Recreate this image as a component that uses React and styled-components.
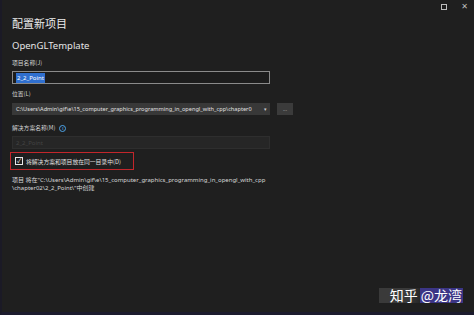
import React from 'react'
import styled, { createGlobalStyle } from 'styled-components'

const Global = createGlobalStyle`
	html, body {
		margin: 0;
		padding: 0;
		background: #1f1f1f;
	}
	body {
		font-family: 'Noto Sans', 'Noto Sans CJK SC', sans-serif;
		color: #d8d8d8;
	}
`

const Window = styled.div`
	position: relative;
	width: 474px;
	height: 315px;
	box-sizing: border-box;
	background: #1f1f1f;
	border-left: 2px solid #1b1a26;
	border-bottom: 3px solid #1c1b2e;
	overflow: hidden;
`

const TitleBar = styled.div`
	display: flex;
	justify-content: flex-end;
	align-items: center;
	gap: 14px;
	height: 14px;
	padding: 0 6px 0 0;
`

const MaxIcon = styled.span`
	width: 4px;
	height: 4px;
	border: 1px solid #bdbdbd;
`

const CloseIcon = styled.span`
	font-size: 8px;
	line-height: 8px;
	color: #bdbdbd;
	font-family: 'DejaVu Sans', sans-serif;
`

const Content = styled.div`
	display: flex;
	flex-direction: column;
	padding: 0 0 0 10px;
`

const Title = styled.h1`
	margin: 2px 0 0;
	font-size: 11px;
	line-height: 14px;
	font-weight: 400;
	color: #ececec;
	font-family: 'Noto Sans CJK SC', sans-serif;
`

const Project = styled.h2`
	margin: 10px 0 0;
	font-size: 9.5px;
	line-height: 12px;
	font-weight: 400;
	color: #e6e6e6;
`

const Label = styled.div`
	display: flex;
	align-items: center;
	gap: 4px;
	margin-top: ${(p) => p.$top}px;
	font-size: 5.8px;
	line-height: 8px;
	color: #d4d4d4;
	font-family: 'Noto Sans CJK SC', sans-serif;
`

const Info = styled.span`
	display: inline-flex;
	align-items: center;
	justify-content: center;
	width: 5px;
	height: 5px;
	border: 1px solid #4ea3e6;
	border-radius: 50%;
	font-size: 4px;
	color: #4ea3e6;
	font-weight: 700;
`

const TextBox = styled.div`
	display: flex;
	align-items: center;
	box-sizing: border-box;
	width: 258px;
	height: 13px;
	margin-top: ${(p) => p.$top}px;
	padding: 0 3px;
	border: 1px solid ${(p) => (p.$disabled ? '#2e2e2e' : '#8a8a8a')};
	background: ${(p) => (p.$disabled ? '#262626' : '#1c1c1c')};
	font-size: 6px;
	color: ${(p) => (p.$disabled ? '#444' : '#fff')};
`

const Selected = styled.span`
	background: #2f6fcf;
	color: #fff;
	padding: 1px 1px;
	line-height: 8px;
`

const Row = styled.div`
	display: flex;
	align-items: center;
	gap: 7px;
	margin-top: 5px;
`

const Combo = styled.div`
	display: flex;
	align-items: center;
	justify-content: space-between;
	box-sizing: border-box;
	width: 258px;
	height: 12px;
	padding: 0 3px 0 4px;
	background: #383838;
	font-size: 5.6px;
	color: #e0e0e0;
	white-space: nowrap;
`

const Chevron = styled.span`
	font-size: 5px;
	color: #cfcfcf;
	margin-left: 3px;
`

const Browse = styled.button`
	width: 16px;
	height: 12px;
	padding: 0;
	border: none;
	background: #3b3b3b;
	color: #cfcfcf;
	font-size: 5px;
	line-height: 12px;
`

const Highlight = styled.div`
	display: flex;
	align-items: center;
	gap: 3px;
	box-sizing: border-box;
	width: 124px;
	height: 18px;
	margin: 3px 0 0 -2px;
	padding-left: 4px;
	border: 1.5px solid #c3262b;
	font-size: 5.8px;
	color: #e0e0e0;
	font-family: 'Noto Sans CJK SC', sans-serif;
`

const Check = styled.span`
	display: inline-flex;
	align-items: center;
	justify-content: center;
	width: 6px;
	height: 6px;
	border: 1px solid #e8e8e8;
	background: #1f1f1f;
	color: #fff;
	font-size: 6px;
	line-height: 6px;
`

const PathNote = styled.p`
	margin: 6px 0 0;
	font-size: 6px;
	line-height: 8px;
	color: #d8d8d8;
	white-space: nowrap;
	font-family: 'Noto Sans', 'Noto Sans CJK SC', sans-serif;
`

const Watermark = styled.div`
	position: absolute;
	right: 11px;
	bottom: 9px;
	display: flex;
	align-items: center;
	font-size: 14px;
	line-height: 15px;
	color: #fff;
	font-family: 'Noto Sans CJK SC', sans-serif;
`

const Zhihu = styled.span`
	padding: 0 2px 0 11px;
	background: linear-gradient(90deg, #3a3a3a 0 70%, #262626 100%);
`

const Author = styled.span`
	padding: 0 1px;
	background: #3b3585;
`

const App = () => {
	return (
		<Window>
			<Global />
			<TitleBar>
				<MaxIcon />
				<CloseIcon>✕</CloseIcon>
			</TitleBar>
			<Content>
				<Title>配置新项目</Title>
				<Project>OpenGLTemplate</Project>

				<Label $top={7}>项目名称(J)</Label>
				<TextBox $top={4}>
					<Selected>2_2_Point</Selected>
				</TextBox>

				<Label $top={6}>位置(L)</Label>
				<Row>
					<Combo>
						<span>
							C:\Users\Admin\gif\e\15_computer_graphics_programming_in_opengl_with_cpp\chapter0
						</span>
						<Chevron>▾</Chevron>
					</Combo>
					<Browse>...</Browse>
				</Row>

				<Label $top={9}>
					解决方案名称(M) <Info>i</Info>
				</Label>
				<TextBox $top={4} $disabled>
					2_2_Point
				</TextBox>

				<Highlight>
					<Check>✓</Check>
					将解决方案和项目放在同一目录中(D)
				</Highlight>

				<PathNote>
					项目 将在"C:\Users\Admin\gif\e\15_computer_graphics_programming_in_opengl_with_cpp
					<br />
					\chapter02\2_2_Point\"中创建
				</PathNote>
			</Content>
			<Watermark>
				<Zhihu>知乎</Zhihu>
				<Author>@龙湾</Author>
			</Watermark>
		</Window>
	)
}

export default App
